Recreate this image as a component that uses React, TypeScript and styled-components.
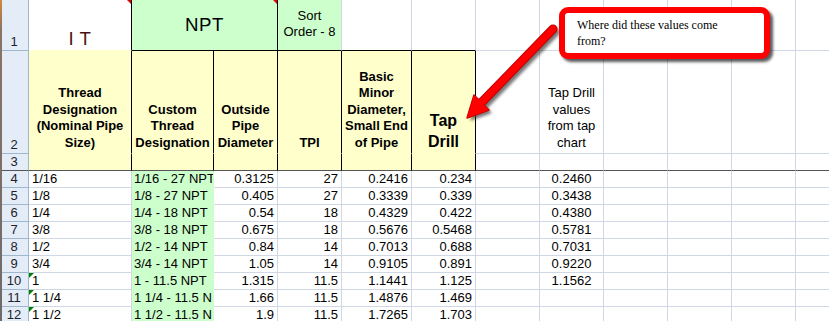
import React from 'react';
import styled, { createGlobalStyle } from 'styled-components';

const GRID = '#d0d7e5';
const HEAD_BG = '#e4ecf7';
const HEAD_LINE = '#9eb6ce';
const YELLOW = '#ffffcc';
const GREEN = '#ccffcc';
const BLACK = '#000000';
const DARK = '#555555';

const GlobalStyle = createGlobalStyle`
  html, body {
    margin: 0;
    padding: 0;
    background: #ffffff;
    overflow: hidden;
  }
  body {
    font-family: "Liberation Sans", Arial, sans-serif;
  }
`;

const Page = styled.div`
  position: relative;
  display: flex;
  width: 829px;
  height: 321px;
  overflow: hidden;
`;

const Frame = styled.div`
  flex: none;
  width: 2px;
  background: linear-gradient(#d08a3a, #8a7464 30px, #6e6a6a);
`;

const Sheet = styled.div`
  display: grid;
  grid-template-columns: 27px 103px 82px 64px 64px 70px 64px 64px 64px 64px 64px 64px 40px;
  grid-template-rows: 51px 103px 17px repeat(9, 17px);
  font-size: 13px;
  color: #000;
`;

type Align = 'left' | 'center' | 'right';

const Cell = styled.div<{
  $bg?: string;
  $r?: string;
  $b?: string;
  $align?: Align;
  $middle?: boolean;
  $span?: number;
  $pb?: number;
  $pl?: number;
}>`
  position: relative;
  box-sizing: border-box;
  display: flex;
  flex-direction: column;
  justify-content: ${(p) => (p.$middle ? 'center' : 'flex-end')};
  align-items: ${(p) =>
    p.$align === 'right' ? 'flex-end' : p.$align === 'center' ? 'center' : 'flex-start'};
  text-align: ${(p) => p.$align || 'left'};
  grid-column: span ${(p) => p.$span || 1};
  padding: 0 3px ${(p) => p.$pb ?? 0}px ${(p) => p.$pl ?? 3}px;
  background: ${(p) => p.$bg || '#ffffff'};
  border-right: 1px solid ${(p) => p.$r || GRID};
  border-bottom: 1px solid ${(p) => p.$b || GRID};
  line-height: 16px;
  white-space: nowrap;
  overflow: hidden;
`;

const RowHead = styled.div<{ $b?: string }>`
  box-sizing: border-box;
  display: flex;
  align-items: flex-end;
  justify-content: center;
  padding-right: 2px;
  background: ${HEAD_BG};
  border-right: 1px solid ${HEAD_LINE};
  border-bottom: 1px solid ${(p) => p.$b || HEAD_LINE};
  color: #1e1e2e;
  font-size: 13px;
  line-height: 16px;
`;

const Big = styled.span<{ $color?: string }>`
  font-size: 18.67px;
  line-height: 22px;
  letter-spacing: 0.5px;
  color: ${(p) => p.$color || '#000'};
`;

const Lines = styled.div<{ $bold?: boolean; $size?: number; $lh?: number }>`
  font-weight: ${(p) => (p.$bold ? 700 : 400)};
  font-size: ${(p) => p.$size || 13}px;
  line-height: ${(p) => p.$lh || 16.5}px;
  text-align: center;
`;

const CommentMark = styled.span`
  position: absolute;
  top: 0;
  right: 0;
  width: 0;
  height: 0;
  border-top: 4px solid #e00000;
  border-left: 4px solid transparent;
`;

const NumberFlag = styled.span`
  position: absolute;
  top: 0;
  left: 0;
  width: 0;
  height: 0;
  border-top: 5px solid #008000;
  border-right: 5px solid transparent;
`;

const Callout = styled.div`
  position: absolute;
  left: 559px;
  top: 7px;
  width: 211px;
  height: 52px;
  box-sizing: border-box;
  padding: 4px 0 0 12px;
  background: #ffffff;
  border: 6px solid #ff0000;
  border-radius: 9px;
  box-shadow: 3px 3px 3px rgba(0, 0, 0, 0.65);
`;

const CalloutText = styled.div`
  width: 150px;
  font-family: "Liberation Serif", "Times New Roman", serif;
  font-size: 12px;
  line-height: 16px;
  color: #000;
`;

const Overlay = styled.svg`
  position: absolute;
  left: 0;
  top: 0;
  pointer-events: none;
`;

// column B only shows what fits before the next filled cell
const data = [
  ['1/16', '1/16 - 27 NPT', '0.3125', '27', '0.2416', '0.234', '0.2460'],
  ['1/8', '1/8 - 27 NPT', '0.405', '27', '0.3339', '0.339', '0.3438'],
  ['1/4', '1/4 - 18 NPT', '0.54', '18', '0.4329', '0.422', '0.4380'],
  ['3/8', '3/8 - 18 NPT', '0.675', '18', '0.5676', '0.5468', '0.5781'],
  ['1/2', '1/2 - 14 NPT', '0.84', '14', '0.7013', '0.688', '0.7031'],
  ['3/4', '3/4 - 14 NPT', '1.05', '14', '0.9105', '0.891', '0.9220'],
  ['1', '1 - 11.5 NPT', '1.315', '11.5', '1.1441', '1.125', '1.1562'],
  ['1 1/4', '1 1/4 - 11.5 N', '1.66', '11.5', '1.4876', '1.469', ''],
  ['1 1/2', '1 1/2 - 11.5 N', '1.9', '11.5', '1.7265', '1.703', ''],
];

const blanks = (n: number, b?: string) =>
  Array.from({ length: n }, (_, i) => <Cell key={`e${i}`} $b={b} />);

const Arrow: React.FC = () => {
  const line = 'M553 29 L482 102';
  const head = '467,118 489,110 474,95';
  return (
    <Overlay width={829} height={321}>
      <defs>
        <filter id="soft" x="-20%" y="-20%" width="140%" height="140%">
          <feGaussianBlur stdDeviation="1.5" />
        </filter>
      </defs>
      <g transform="translate(3 3)" filter="url(#soft)" opacity="0.65">
        <path d={line} stroke="#333" strokeWidth={8} strokeLinecap="round" />
        <polygon points={head} fill="#333" />
      </g>
      <path d={line} stroke="#c00000" strokeWidth={9} strokeLinecap="round" />
      <polygon points={head} fill="#c00000" stroke="#c00000" strokeWidth={1.5} strokeLinejoin="round" />
      <path d={line} stroke="#ff0000" strokeWidth={7} strokeLinecap="round" />
      <polygon points={head} fill="#ff0000" />
    </Overlay>
  );
};

const App: React.FC = () => {
  return (
    <Page>
      <GlobalStyle />
      <Frame />
      <Sheet>
        {/* row 1 */}
        <RowHead>1</RowHead>
        <Cell $align="center" $r={BLACK} $b={YELLOW}>
          <Big $color="#4a1212">I T</Big>
          <CommentMark />
        </Cell>
        <Cell $span={2} $bg={GREEN} $align="center" $middle $r={BLACK} $b={BLACK}>
          <Big>NPT</Big>
          <CommentMark />
        </Cell>
        <Cell $bg={GREEN} $align="center" $middle $b={BLACK} $pb={3}>
          <Lines $lh={16}>
            Sort
            <br />
            Order - 8
          </Lines>
        </Cell>
        <Cell $b={BLACK} />
        <Cell $b={BLACK} />
        {blanks(6)}

        {/* row 2 */}
        <RowHead>2</RowHead>
        <Cell $bg={YELLOW} $align="center" $r={BLACK} $b={YELLOW} $pb={2}>
          <Lines $bold>
            Thread
            <br />
            Designation
            <br />
            (Nominal Pipe
            <br />
            Size)
          </Lines>
        </Cell>
        <Cell $bg={YELLOW} $align="center" $r={BLACK} $b={YELLOW} $pb={2}>
          <Lines $bold>
            Custom
            <br />
            Thread
            <br />
            Designation
          </Lines>
        </Cell>
        <Cell $bg={YELLOW} $align="center" $r={BLACK} $b={YELLOW} $pb={2}>
          <Lines $bold>
            Outside
            <br />
            Pipe
            <br />
            Diameter
          </Lines>
        </Cell>
        <Cell $bg={YELLOW} $align="center" $r={BLACK} $b={YELLOW} $pb={2}>
          <Lines $bold>TPI</Lines>
        </Cell>
        <Cell $bg={YELLOW} $align="center" $r={BLACK} $b={YELLOW} $pb={2}>
          <Lines $bold>
            Basic
            <br />
            Minor
            <br />
            Diameter,
            <br />
            Small End
            <br />
            of Pipe
          </Lines>
        </Cell>
        <Cell $bg={YELLOW} $align="center" $r={BLACK} $b={YELLOW} $pb={1}>
          <Lines $bold $size={16} $lh={20.5}>
            Tap
            <br />
            Drill
          </Lines>
        </Cell>
        <Cell />
        <Cell $align="center" $pb={2}>
          <Lines>
            Tap Drill
            <br />
            values
            <br />
            from tap
            <br />
            chart
          </Lines>
        </Cell>
        {blanks(4)}

        {/* row 3 */}
        <RowHead $b={DARK}>3</RowHead>
        {Array.from({ length: 6 }, (_, i) => (
          <Cell key={`y${i}`} $bg={YELLOW} $r={BLACK} $b={DARK} />
        ))}
        {blanks(6, DARK)}

        {/* data rows */}
        {data.map((row, i) => (
          <React.Fragment key={row[0]}>
            <RowHead>{i + 4}</RowHead>
            <Cell>
              {i >= 6 && <NumberFlag />}
              {row[0]}
            </Cell>
            <Cell $bg={GREEN} $r={GREEN} $b={GREEN} $pl={2}>
              {row[1]}
            </Cell>
            <Cell $align="right">{row[2]}</Cell>
            <Cell $align="right">{row[3]}</Cell>
            <Cell $align="right">{row[4]}</Cell>
            <Cell $align="right">{row[5]}</Cell>
            <Cell />
            <Cell $align="center">{row[6]}</Cell>
            {blanks(4)}
          </React.Fragment>
        ))}
      </Sheet>

      <Arrow />
      <Callout>
        <CalloutText>Where did these values come from?</CalloutText>
      </Callout>
    </Page>
  );
};

export default App;
